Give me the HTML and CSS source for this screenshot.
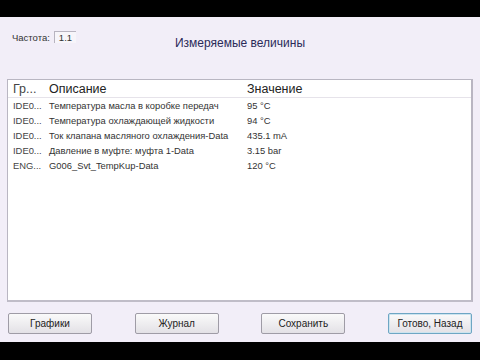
FILE: index.html
```html
<!DOCTYPE html>
<html lang="ru">
<head>
  <meta charset="UTF-8">
  <title>Измеряемые величины</title>
  <link rel="stylesheet" href="styles.css">
</head>
<body>
  <div class="bar"></div>
  <div class="screen">
    <div class="top">
      <div class="freq">
        <span class="freq-label">Частота:</span>
        <span class="freq-box">1.1</span>
      </div>
      <h1 class="title">Измеряемые величины</h1>
    </div>

    <div class="list">
      <div class="row head">
        <span class="c1">Гр...</span>
        <span class="c2">Описание</span>
        <span class="c3">Значение</span>
      </div>
      <div class="row">
        <span class="c1">IDE0...</span>
        <span class="c2">Температура масла в коробке передач</span>
        <span class="c3">95 °C</span>
      </div>
      <div class="row">
        <span class="c1">IDE0...</span>
        <span class="c2">Температура охлаждающей жидкости</span>
        <span class="c3">94 °C</span>
      </div>
      <div class="row">
        <span class="c1">IDE0...</span>
        <span class="c2">Ток клапана масляного охлаждения-Data</span>
        <span class="c3">435.1 mA</span>
      </div>
      <div class="row">
        <span class="c1">IDE0...</span>
        <span class="c2">Давление в муфте: муфта 1-Data</span>
        <span class="c3">3.15 bar</span>
      </div>
      <div class="row">
        <span class="c1">ENG...</span>
        <span class="c2">G006_Svt_TempKup-Data</span>
        <span class="c3">120 °C</span>
      </div>
    </div>

    <div class="buttons">
      <button class="btn">Графики</button>
      <button class="btn">Журнал</button>
      <button class="btn">Сохранить</button>
      <button class="btn active">Готово, Назад</button>
    </div>
  </div>
  <div class="bar bottom"></div>
</body>
</html>
```

FILE: styles.css
```css
body {
  margin: 0;
  width: 480px;
  height: 360px;
  background: #000;
  font-family: "Liberation Sans", Arial, sans-serif;
  overflow: hidden;
}
.bar {
  height: 17px;
  background: #000;
}
.bar.bottom {
  height: 18px;
}
.screen {
  height: 325px;
  background: #f2eef8;
  display: flex;
  flex-direction: column;
}
.top {
  height: 62px;
  position: relative;
}
.freq {
  position: absolute;
  left: 12px;
  top: 14px;
  display: flex;
  align-items: center;
  gap: 4px;
  font-size: 9.5px;
  color: #333;
}
.freq-box {
  padding: 0 4px;
  border-left: 1px solid #b8b4c0;
  border-top: 1px solid #b8b4c0;
  background: #f7f5fa;
  line-height: 11px;
}
.title {
  margin: 0;
  padding-top: 19px;
  text-align: center;
  font-size: 12px;
  font-weight: normal;
  color: #2a2a58;
}
.list {
  margin: 0 7px;
  height: 220px;
  background: #fff;
  border: 1px solid #b9b6c2;
  border-right: 2px solid #b9b6c2;
  border-bottom: 2px solid #c0bdc8;
}
.row {
  display: flex;
  height: 15px;
  align-items: center;
  font-size: 9.4px;
  color: #333;
}
.row.head {
  height: 17px;
  font-size: 12.5px;
  color: #222;
  border-bottom: 1px solid #e6e3ea;
}
.c1 {
  width: 36px;
  padding-left: 5px;
  color: #444;
}
.c2 {
  width: 198px;
}
.c3 {
  flex: 1;
}
.buttons {
  display: flex;
  justify-content: space-between;
  padding: 11px 8px 0 8px;
}
.btn {
  width: 84px;
  height: 21px;
  font-family: "Liberation Sans", Arial, sans-serif;
  font-size: 10px;
  color: #222;
  background: linear-gradient(#fafafa, #e3e1e6);
  border: 1px solid #9f9ca6;
  border-radius: 2px;
  padding: 0;
}
.btn.active {
  border-color: #6ea6c4;
  box-shadow: inset 0 0 0 1px #cde4ef;
}
```
